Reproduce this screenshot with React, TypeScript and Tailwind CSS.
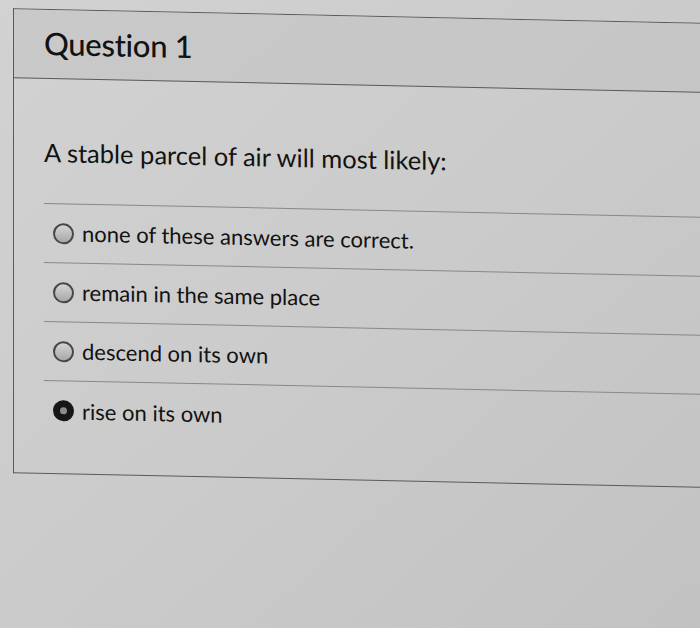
export default function App() {
  const options = [
    { label: "none of these answers are correct.", checked: false },
    { label: "remain in the same place", checked: false },
    { label: "descend on its own", checked: false },
    { label: "rise on its own", checked: true },
  ];

  return (
    <div className="w-[700px] h-[628px] overflow-hidden bg-linear-to-br from-[#d2d2d2] via-[#cbcbcb] to-[#c2c2c2] font-['Lato','Liberation_Sans',sans-serif] text-[#121212]">
      <div className="pl-[13px] pt-[8px] origin-top-left skew-y-[1.2deg]">
        <div className="w-[740px] border-l border-t border-b border-[#5a5a5a]">
          {/* header */}
          <div className="h-[69px] flex items-center pl-[30px] pb-[2px] border-b border-[#5a5a5a] bg-[#c3c3c3]/60">
            <h1 className="text-[31px] font-medium tracking-[-0.3px]">Question 1</h1>
          </div>

          {/* body */}
          <div className="pl-[30px] pt-[58px] pb-[33px]">
            <p className="text-[25.5px] leading-[30px]">A stable parcel of air will most likely:</p>
            <div className="mt-[36px] border-t border-[#888888]">
              {options.map((o) => (
                <div
                  key={o.label}
                  className="h-[59px] flex items-center gap-[8px] pl-[9px] border-b border-[#888888] last:border-b-0"
                >
                  {o.checked ? (
                    <span className="w-[21px] h-[21px] shrink-0 rounded-full bg-[#161616] flex items-center justify-center">
                      <span className="w-[7px] h-[7px] rounded-full bg-[#8c8c8c]" />
                    </span>
                  ) : (
                    <span className="w-[21px] h-[21px] shrink-0 rounded-full border-2 border-[#474747] bg-linear-to-b from-[#d4d4d4] to-[#a8a8a8]" />
                  )}
                  <span className="text-[22px] leading-none">{o.label}</span>
                </div>
              ))}
            </div>
          </div>
        </div>
      </div>
    </div>
  );
}
